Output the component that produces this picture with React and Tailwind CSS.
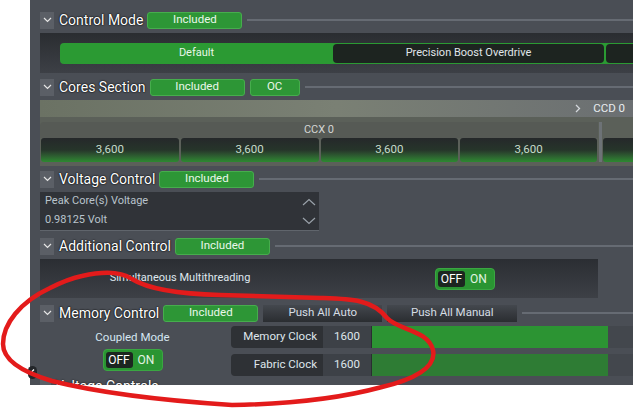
import React from "react";

const Chevron = () => (
  <div className="w-[14px] h-[17px] bg-[#5b5f66] flex items-center justify-center shrink-0">
    <svg width="9" height="6" viewBox="0 0 9 6">
      <path d="M1 1 L4.5 4.5 L8 1" stroke="#e6e6e6" strokeWidth="1.2" fill="none" />
    </svg>
  </div>
);

const Badge = ({ w, children }) => (
  <div
    className={`${w} h-[17px] rounded-[3px] bg-[#2d9636] border border-[#46ad4d] text-[11.5px] text-[#eaf6ea] flex items-center justify-center`}
  >
    {children}
  </div>
);

const Header = ({ title, children }) => (
  <div className="flex items-center h-[18px]">
    <Chevron />
    <span className="ml-[5px] text-[14px] leading-none text-white [text-shadow:0_0_2px_#000,0_0_1px_#000] whitespace-nowrap">
      {title}
    </span>
    <div className="flex items-center gap-[5px] ml-[4px]">{children}</div>
    <div className="flex-1 h-[2px] bg-[#666b73] ml-[5px]" />
  </div>
);

const PushButton = ({ w, children }) => (
  <div
    className={`${w} h-[17px] bg-gradient-to-b from-[#44484e] to-[#2a2d31] text-[11.5px] text-[#d6dde4] flex items-center justify-center`}
  >
    {children}
  </div>
);

const Toggle = () => (
  <div className="w-[60px] h-[22px] rounded-[4px] bg-[#2a9532] border border-[#3aa742] flex items-center p-[2px] text-[12px]">
    <div className="w-[27px] h-full rounded-[3px] bg-[#1c2620] text-white flex items-center justify-center">
      OFF
    </div>
    <div className="flex-1 text-[#e2f4e2] flex items-center justify-center">ON</div>
  </div>
);

const FreqCell = ({ w }) => (
  <div
    className={`${w} h-[24px] rounded-[3px] bg-gradient-to-b from-[#25282a] via-[#26352a] to-[#2c8a30] text-[11.5px] text-[#c6dccb] flex items-center justify-center`}
  >
    3,600
  </div>
);

const ClockRow = ({ label, bar }) => (
  <div className="flex h-[22px]">
    <div className="w-[92px] rounded-l-[4px] bg-[#2e3135] text-[11.5px] text-[#dfe6ec] flex items-center justify-end pr-[6px]">
      {label}
    </div>
    <div className="w-[49px] bg-[#3d4147] text-[11.5px] text-[#dfe6ec] flex items-center justify-center border-r border-[#2a2d31]">
      1600
    </div>
    <div className={`w-[236px] ${bar}`} />
    <div className="flex-1 bg-[#43474d]" />
  </div>
);

export default function App() {
  return (
    <div className="relative w-[633px] h-[408px] bg-white overflow-hidden font-['Roboto',sans-serif]">
      <div className="ml-[30px] w-[603px] h-[385px] bg-[#4a4e55] pl-[10px] pt-[11px] overflow-hidden">
        {/* Control Mode */}
        <Header title="Control Mode">
          <Badge w="w-[95px]">Included</Badge>
        </Header>
        <div className="mt-[4px] h-[40px] bg-gradient-to-b from-[#2a2d31] to-[#3d4046] pl-[20px] flex items-center">
          <div className="flex h-[21px] w-[600px] rounded-l-[4px] bg-[#2b9a33] text-[11px]">
            <div className="w-[273px] flex items-center justify-center text-[#e8f6e8]">Default</div>
            <div className="w-[271px] my-[1px] rounded-[4px] bg-[#1d2420] flex items-center justify-center text-[#e0e6ea]">
              Precision Boost Overdrive
            </div>
            <div className="flex-1 ml-[2px] my-[1px] rounded-l-[4px] bg-[#1d2420]" />
          </div>
        </div>

        {/* Cores Section */}
        <div className="mt-[5px]">
          <Header title="Cores Section">
            <Badge w="w-[95px]">Included</Badge>
            <Badge w="w-[50px]">OC</Badge>
          </Header>
        </div>
        <div className="mt-[4px]">
          <div className="h-[17px] bg-gradient-to-r from-[#6b7264] via-[#7a8074] to-[#6b6f72] flex items-center justify-end pr-[8px] text-[11.5px] text-[#e8ecef]">
            <svg className="mr-[12px]" width="6" height="9" viewBox="0 0 6 9">
              <path d="M1 1 L4.5 4.5 L1 8" stroke="#d4d8dc" strokeWidth="1.3" fill="none" />
            </svg>
            CCD 0
          </div>
          <div className="bg-[#5b6059] pt-[5px] pb-[4px]">
            <div className="flex">
              <div className="w-[558px]">
                <div className="h-[16px] rounded-tl-[4px] bg-[#565a55] flex items-center justify-center text-[11px] text-[#d4d6d4]">
                  CCX 0
                </div>
                <div className="flex gap-[2px] px-[1px]">
                  <FreqCell w="w-[138px]" />
                  <FreqCell w="w-[138px]" />
                  <FreqCell w="w-[138px]" />
                  <FreqCell w="w-[137px]" />
                </div>
              </div>
              <div className="w-[3px] mx-[1px] bg-[#6d7276]" />
              <div className="flex-1 pt-[16px]">
                <div className="h-[24px] rounded-l-[3px] bg-gradient-to-b from-[#25282a] via-[#26352a] to-[#2c8a30]" />
              </div>
            </div>
          </div>
        </div>

        {/* Voltage Control */}
        <div className="mt-[4px]">
          <Header title="Voltage Control">
            <Badge w="w-[95px]">Included</Badge>
          </Header>
        </div>
        <div className="mt-[4px] w-[279px] h-[39px] bg-[#303338] border-b border-[#60656c] pl-[5px] pr-[2px] flex text-[11px] text-[#b9c3cc]">
          <div className="flex-1 flex flex-col justify-around">
            <span>Peak Core(s) Voltage</span>
            <span>0.98125 Volt</span>
          </div>
          <div className="flex flex-col justify-around items-center w-[16px]">
            <svg width="14" height="8" viewBox="0 0 14 8">
              <path d="M1 7 L7 1.5 L13 7" stroke="#9aa2aa" strokeWidth="1.2" fill="none" />
            </svg>
            <svg width="14" height="8" viewBox="0 0 14 8">
              <path d="M1 1 L7 6.5 L13 1" stroke="#9aa2aa" strokeWidth="1.2" fill="none" />
            </svg>
          </div>
        </div>

        {/* Additional Control */}
        <div className="mt-[6px]">
          <Header title="Additional Control">
            <Badge w="w-[95px]">Included</Badge>
          </Header>
        </div>
        <div className="mt-[4px] w-[558px] h-[39px] bg-gradient-to-b from-[#2b2e33] to-[#3d4046] flex items-center">
          <div className="w-[280px] text-center text-[11px] text-[#dfe7ee]">Simultaneous Multithreading</div>
          <div className="flex-1 flex justify-center pl-[12px]">
            <Toggle />
          </div>
        </div>

        {/* Memory Control */}
        <div className="mt-[6px]">
          <Header title="Memory Control">
            <Badge w="w-[95px]">Included</Badge>
            <PushButton w="w-[119px]">Push All Auto</PushButton>
            <PushButton w="w-[130px]">Push All Manual</PushButton>
          </Header>
        </div>
        <div className="mt-[4px] flex">
          <div className="w-[185px] flex flex-col items-center pt-[3px]">
            <span className="text-[11.5px] text-[#d5e6f2]">Coupled Mode</span>
            <div className="mt-[3px]">
              <Toggle />
            </div>
          </div>
          <div className="flex-1 ml-[6px] flex flex-col gap-[6px]">
            <ClockRow label="Memory Clock" bar="bg-[#2c9433]" />
            <ClockRow label="Fabric Clock" bar="bg-[#2e7c34]" />
          </div>
        </div>

        {/* Voltage Controls, cut by the panel edge */}
        <div className="mt-[3px] flex items-start">
          <div className="w-[11px] h-[12px] bg-[#5b5f66]" />
          <span className="ml-[4px] text-[14px] leading-none text-white [text-shadow:0_0_2px_#000]">Voltage Controls</span>
        </div>
      </div>

      {/* left scroll arrow */}
      <div className="absolute left-[28px] top-[366px] w-[9px] h-[13px] rounded-full bg-[#23262a] flex items-center justify-center">
        <svg width="5" height="7" viewBox="0 0 5 7">
          <path d="M4 0.5 L1 3.5 L4 6.5" stroke="#fff" strokeWidth="1.2" fill="none" />
        </svg>
      </div>

      {/* red hand-drawn annotation */}
      <svg className="absolute inset-0 pointer-events-none" width="633" height="408" viewBox="0 0 633 408">
        <path
          d="M82 276 C100 272, 120 271, 132 279 C148 289, 180 294, 220 295 L320 298 C350 299, 372 299, 387 318 C398 330, 428 330, 433 350 C437 368, 412 380, 382 387 C345 397, 300 404, 232 405 C170 401, 100 393, 52 381 C22 372, 3 360, 3 344 C3 324, 20 302, 50 288 C62 282, 72 278, 82 276"
          stroke="#e31b1b"
          strokeWidth="4.5"
          fill="none"
          strokeLinecap="round"
        />
      </svg>
    </div>
  );
}
